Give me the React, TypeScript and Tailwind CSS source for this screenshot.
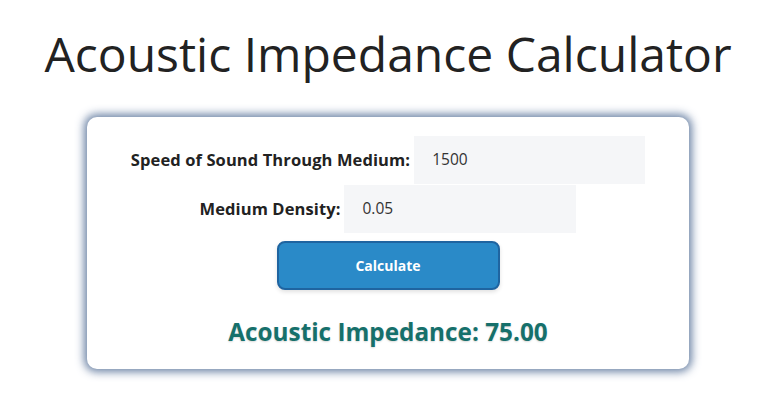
import React from "react";

export default function App() {
  return (
    <div
      className="w-[768px] h-[409px] bg-white flex flex-col items-center pl-[8px]"
      style={{ fontFamily: '"Open Sans", "Noto Sans", sans-serif' }}
    >
      <h1 className="mt-[21px] h-[66px] text-[48px] leading-[66px] text-[#222]">
        Acoustic Impedance Calculator
      </h1>
      <div className="mt-[30px] w-[602px] h-[252px] bg-white rounded-[10px] shadow-[0_0_9px_3px_rgba(85,112,150,0.85)] flex flex-col items-center pt-[19px]">
        <div className="flex items-center">
          <label className="text-[16.5px] font-bold text-[#222] mr-[4px] tracking-[0.1px]">
            Speed of Sound Through Medium:
          </label>
          <div className="w-[231px] h-[48px] bg-[#f5f6f8] flex items-center px-[18px] text-[15.5px] text-[#333]">
            1500
          </div>
        </div>
        <div className="flex items-center mt-[1px]">
          <label className="text-[16.5px] font-bold text-[#222] mr-[4px] tracking-[0.1px]">
            Medium Density:
          </label>
          <div className="w-[232px] h-[48px] bg-[#f5f6f8] flex items-center px-[18px] text-[15.5px] text-[#333]">
            0.05
          </div>
        </div>
        <button className="mt-[8px] w-[223px] h-[49px] bg-[#2a8ac8] border-2 border-[#1f64a0] rounded-[8px] text-white text-[14px] font-bold shadow-[0_2px_4px_rgba(0,0,0,0.12)]">
          Calculate
        </button>
        <div className="mt-[24px] text-[24.3px] font-bold text-[#16706b] [text-shadow:0_1px_2px_rgba(0,0,0,0.15)]">
          Acoustic Impedance: 75.00
        </div>
      </div>
    </div>
  );
}
